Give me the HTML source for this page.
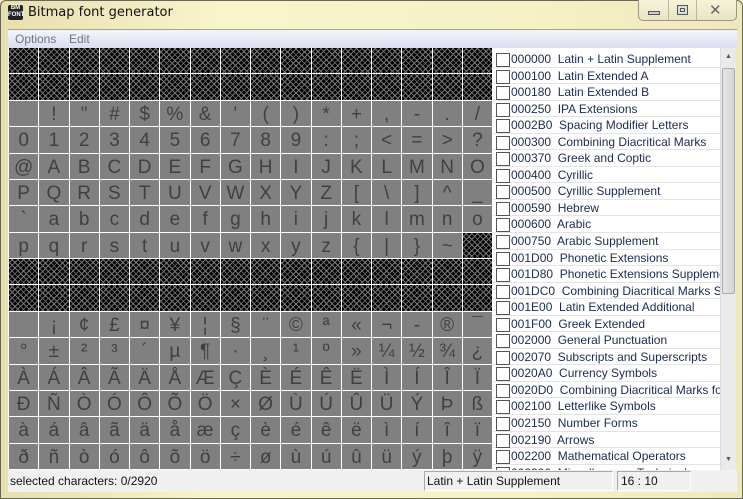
<!DOCTYPE html>
<html><head><meta charset="utf-8"><style>
*{margin:0;padding:0;box-sizing:border-box}
body{width:743px;height:499px;overflow:hidden;background:#f3edc4;font-family:"Liberation Sans","DejaVu Sans",sans-serif;position:relative}
.frame{position:absolute;left:0;top:0;width:743px;height:499px;border:1px solid #6b6850;border-radius:6px 6px 0 0;background:linear-gradient(90deg,#e8dfb0,#f8f4cc 30%,#f6f2c6 70%,#efe8bc)}
.title{position:absolute;left:10px;top:5px;font-size:13px;color:#111;font-family:"DejaVu Sans",sans-serif}
.icon{position:absolute;left:8px;top:5px;width:15px;height:15px;background:#222;color:#fff;font-size:6px;line-height:7px;text-align:center;font-weight:bold;border-radius:2px}
.btns{position:absolute;left:638px;top:0;width:99px;height:21px;border:1px solid #9a977f;border-top:none;border-radius:0 0 5px 5px;background:linear-gradient(#f6f3da,#e8e4c4)}
.btns span{position:absolute;top:0;height:20px;border-right:1px solid #b9b69c}
.menu{position:absolute;left:8px;top:29px;width:729px;height:19px;background:linear-gradient(#f4f5fb,#dadeef);border-top:1px solid #9aa0b5;font-size:12px;color:#6d7388}
.menu span{position:absolute;top:2px}
.grid{position:absolute;left:8px;top:48px;width:485px;height:422px;background:#fff;display:grid;grid-template-columns:repeat(16,1fr);grid-template-rows:repeat(16,1fr);gap:1px;padding:0 1px 1px 1px}
.grid b{background:#808080;color:#404040;font-weight:normal;font-size:19px;text-align:center;line-height:28px;overflow:hidden}
.grid i{background-color:#000;background-image:repeating-linear-gradient(45deg,transparent 0 3px,#777 3px 4px),repeating-linear-gradient(-45deg,transparent 0 3px,#777 3px 4px)}
.list{position:absolute;left:493px;top:48px;width:227px;height:422px;background:#fff;overflow:hidden;font-size:12px;color:#1a2a50;padding-top:3px}
.list div{height:16.55px;border-bottom:1px solid #e4e4e4;white-space:nowrap;position:relative;padding-left:18px;line-height:16px}
.list div:before{content:"";position:absolute;left:3px;top:2px;width:12px;height:12px;border:1px solid #555;background:#fff}
.sb{position:absolute;left:720px;top:48px;width:16px;height:422px;background:#eaeaea;border-left:1px solid #ddd}
.thumb{position:absolute;left:722px;top:68px;width:13px;height:226px;background:linear-gradient(90deg,#e6e6e6,#d6d6d6);border:1px solid #aaa;border-radius:2px}
.status{position:absolute;left:8px;top:470px;width:729px;height:22px;background:#f0f0f0;font-size:12px;color:#111}
.status span{position:absolute;top:4px}
.p{position:absolute;top:1px;height:20px;border:1px solid #a8a8a8;border-right-color:#fff;border-bottom-color:#fff}
</style></head><body>
<div class="frame"></div>
<div class="icon">BM<br>FONT</div>
<div class="title" style="left:28px">Bitmap font generator</div>
<div class="btns"><span style="left:0;width:30px"></span><span style="left:30px;width:28px"></span>
<div style="position:absolute;left:9px;top:11px;width:12px;height:4px;border:1px solid #555;background:#ccc"></div>
<div style="position:absolute;left:38px;top:5px;width:11px;height:10px;border:1px solid #555;background:#ddd"><div style="margin:2px;height:4px;border:1px solid #555"></div></div>
<div style="position:absolute;left:70px;top:1px;font-size:15px;color:#666;font-weight:bold">✕</div></div>
<div class="menu"><span style="left:7px">Options</span><span style="left:61px">Edit</span></div>
<div class="grid">
<i></i><i></i><i></i><i></i><i></i><i></i><i></i><i></i><i></i><i></i><i></i><i></i><i></i><i></i><i></i><i></i>
<i></i><i></i><i></i><i></i><i></i><i></i><i></i><i></i><i></i><i></i><i></i><i></i><i></i><i></i><i></i><i></i>
<b> </b><b>!</b><b>"</b><b>#</b><b>$</b><b>%</b><b>&amp;</b><b>'</b><b>(</b><b>)</b><b>*</b><b>+</b><b>,</b><b>-</b><b>.</b><b>/</b>
<b>0</b><b>1</b><b>2</b><b>3</b><b>4</b><b>5</b><b>6</b><b>7</b><b>8</b><b>9</b><b>:</b><b>;</b><b>&lt;</b><b>=</b><b>&gt;</b><b>?</b>
<b>@</b><b>A</b><b>B</b><b>C</b><b>D</b><b>E</b><b>F</b><b>G</b><b>H</b><b>I</b><b>J</b><b>K</b><b>L</b><b>M</b><b>N</b><b>O</b>
<b>P</b><b>Q</b><b>R</b><b>S</b><b>T</b><b>U</b><b>V</b><b>W</b><b>X</b><b>Y</b><b>Z</b><b>[</b><b>\</b><b>]</b><b>^</b><b>_</b>
<b>`</b><b>a</b><b>b</b><b>c</b><b>d</b><b>e</b><b>f</b><b>g</b><b>h</b><b>i</b><b>j</b><b>k</b><b>l</b><b>m</b><b>n</b><b>o</b>
<b>p</b><b>q</b><b>r</b><b>s</b><b>t</b><b>u</b><b>v</b><b>w</b><b>x</b><b>y</b><b>z</b><b>{</b><b>|</b><b>}</b><b>~</b><i></i>
<i></i><i></i><i></i><i></i><i></i><i></i><i></i><i></i><i></i><i></i><i></i><i></i><i></i><i></i><i></i><i></i>
<i></i><i></i><i></i><i></i><i></i><i></i><i></i><i></i><i></i><i></i><i></i><i></i><i></i><i></i><i></i><i></i>
<b> </b><b>¡</b><b>¢</b><b>£</b><b>¤</b><b>¥</b><b>¦</b><b>§</b><b>¨</b><b>©</b><b>ª</b><b>«</b><b>¬</b><b>-</b><b>®</b><b>¯</b>
<b>°</b><b>±</b><b>²</b><b>³</b><b>´</b><b>µ</b><b>¶</b><b>·</b><b>¸</b><b>¹</b><b>º</b><b>»</b><b>¼</b><b>½</b><b>¾</b><b>¿</b>
<b>À</b><b>Á</b><b>Â</b><b>Ã</b><b>Ä</b><b>Å</b><b>Æ</b><b>Ç</b><b>È</b><b>É</b><b>Ê</b><b>Ë</b><b>Ì</b><b>Í</b><b>Î</b><b>Ï</b>
<b>Ð</b><b>Ñ</b><b>Ò</b><b>Ó</b><b>Ô</b><b>Õ</b><b>Ö</b><b>×</b><b>Ø</b><b>Ù</b><b>Ú</b><b>Û</b><b>Ü</b><b>Ý</b><b>Þ</b><b>ß</b>
<b>à</b><b>á</b><b>â</b><b>ã</b><b>ä</b><b>å</b><b>æ</b><b>ç</b><b>è</b><b>é</b><b>ê</b><b>ë</b><b>ì</b><b>í</b><b>î</b><b>ï</b>
<b>ð</b><b>ñ</b><b>ò</b><b>ó</b><b>ô</b><b>õ</b><b>ö</b><b>÷</b><b>ø</b><b>ù</b><b>ú</b><b>û</b><b>ü</b><b>ý</b><b>þ</b><b>ÿ</b>
</div>
<div class="list">
<div>000000&nbsp; Latin + Latin Supplement</div>
<div>000100&nbsp; Latin Extended A</div>
<div>000180&nbsp; Latin Extended B</div>
<div>000250&nbsp; IPA Extensions</div>
<div>0002B0&nbsp; Spacing Modifier Letters</div>
<div>000300&nbsp; Combining Diacritical Marks</div>
<div>000370&nbsp; Greek and Coptic</div>
<div>000400&nbsp; Cyrillic</div>
<div>000500&nbsp; Cyrillic Supplement</div>
<div>000590&nbsp; Hebrew</div>
<div>000600&nbsp; Arabic</div>
<div>000750&nbsp; Arabic Supplement</div>
<div>001D00&nbsp; Phonetic Extensions</div>
<div>001D80&nbsp; Phonetic Extensions Supplement</div>
<div>001DC0&nbsp; Combining Diacritical Marks Supplement</div>
<div>001E00&nbsp; Latin Extended Additional</div>
<div>001F00&nbsp; Greek Extended</div>
<div>002000&nbsp; General Punctuation</div>
<div>002070&nbsp; Subscripts and Superscripts</div>
<div>0020A0&nbsp; Currency Symbols</div>
<div>0020D0&nbsp; Combining Diacritical Marks for Symbols</div>
<div>002100&nbsp; Letterlike Symbols</div>
<div>002150&nbsp; Number Forms</div>
<div>002190&nbsp; Arrows</div>
<div>002200&nbsp; Mathematical Operators</div>
<div>002300&nbsp; Miscellaneous Technical</div>
</div>
<div class="sb"><div style="position:absolute;left:4px;top:5px;font-size:7px;color:#555">▲</div><div style="position:absolute;left:4px;top:408px;font-size:7px;color:#555">▼</div></div>
<div class="thumb"></div>
<div class="status"><span style="left:2px">selected characters: 0/2920</span>
<div class="p" style="left:416px;width:189px"></div><span style="left:419px">Latin + Latin Supplement</span>
<div class="p" style="left:609px;width:74px"></div><span style="left:613px">16 : 10</span></div>
</body></html>
